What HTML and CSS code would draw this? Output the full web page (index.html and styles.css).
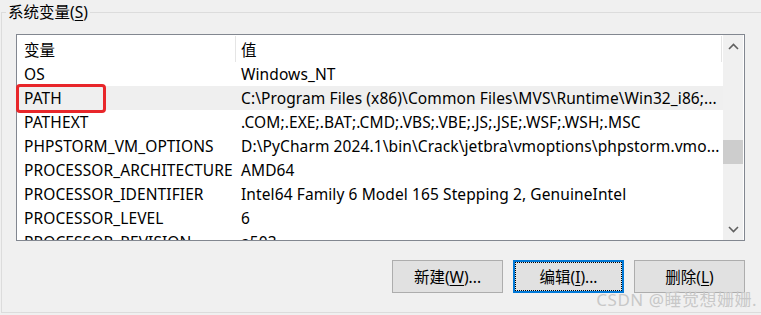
FILE: index.html
```html
<!DOCTYPE html>
<html lang="zh-CN">
<head>
    <meta charset="UTF-8">
    <meta name="viewport" content="width=device-width, initial-scale=1.0">
    <title>系统变量</title>
    <link rel="stylesheet" href="styles.css">
</head>
<body>
    <fieldset class="group">
        <legend>系统变量(<u>S</u>)</legend>

        <div class="list">
            <div class="rows">
                <div class="row header">
                    <div class="cell name">变量</div>
                    <div class="cell value">值</div>
                </div>
                <div class="row">
                    <div class="cell name">OS</div>
                    <div class="cell value">Windows_NT</div>
                </div>
                <div class="row hover">
                    <div class="cell name">PATH</div>
                    <div class="cell value">C:\Program Files (x86)\Common Files\MVS\Runtime\Win32_i86;...</div>
                </div>
                <div class="row">
                    <div class="cell name">PATHEXT</div>
                    <div class="cell value">.COM;.EXE;.BAT;.CMD;.VBS;.VBE;.JS;.JSE;.WSF;.WSH;.MSC</div>
                </div>
                <div class="row">
                    <div class="cell name">PHPSTORM_VM_OPTIONS</div>
                    <div class="cell value">D:\PyCharm 2024.1\bin\Crack\jetbra\vmoptions\phpstorm.vmo...</div>
                </div>
                <div class="row">
                    <div class="cell name">PROCESSOR_ARCHITECTURE</div>
                    <div class="cell value">AMD64</div>
                </div>
                <div class="row">
                    <div class="cell name">PROCESSOR_IDENTIFIER</div>
                    <div class="cell value">Intel64 Family 6 Model 165 Stepping 2, GenuineIntel</div>
                </div>
                <div class="row">
                    <div class="cell name">PROCESSOR_LEVEL</div>
                    <div class="cell value">6</div>
                </div>
                <div class="row">
                    <div class="cell name">PROCESSOR_REVISION</div>
                    <div class="cell value">a503</div>
                </div>
            </div>

            <div class="scrollbar">
                <div class="arrow">
                    <svg width="11" height="7" viewBox="0 0 11 7"><path d="M1 6 L5.5 1.5 L10 6" fill="none" stroke="#606060" stroke-width="1.6"/></svg>
                </div>
                <div class="track"><div class="thumb"></div></div>
                <div class="arrow">
                    <svg width="11" height="7" viewBox="0 0 11 7"><path d="M1 1 L5.5 5.5 L10 1" fill="none" stroke="#606060" stroke-width="1.6"/></svg>
                </div>
            </div>

            <div class="mark"></div>
        </div>

        <div class="buttons">
            <button>新建(<u>W</u>)...</button>
            <button class="focused">编辑(<u>I</u>)...</button>
            <button>删除(<u>L</u>)</button>
        </div>
    </fieldset>

    <div class="watermark">CSDN @睡觉想姗姗.</div>
</body>
</html>
```

FILE: styles.css
```css
body {
    margin: 0;
    height: 315px;
    overflow: hidden;
    background-color: #f0f0f0;
    font-family: "Noto Sans", "Noto Sans CJK SC", sans-serif;
    font-size: 15.5px;
    color: #000;
    position: relative;
}
.group {
    margin: 2px -20px 0 1px;
    padding: 0 0 19px 4px;
    border: 1px solid #dcdcdc;
    min-width: 0;
}
.group legend {
    padding: 0 2px;
    line-height: 20px;
}
.group u,
.buttons u {
    text-decoration-thickness: 1px;
    text-underline-offset: 2px;
}
.list {
    position: relative;
    display: flex;
    box-sizing: border-box;
    width: 729px;
    height: 207px;
    margin: 12px 0 0 10px;
    border: 1px solid #828790;
    background-color: #fff;
}
.rows {
    flex: 1;
    overflow: hidden;
    letter-spacing: 0.1px;
}
.row {
    display: flex;
    height: 24px;
    line-height: 24px;
    white-space: nowrap;
}
.row.hover {
    background-color: #efefef;
}
.cell {
    box-sizing: border-box;
    overflow: hidden;
}
.cell.name {
    width: 219px;
    padding-left: 7px;
}
.cell.value {
    width: 486px;
    padding: 0 4px 0 5px;
}
.header {
    height: 27px;
    line-height: 29px;
}
.header .cell {
    border-right: 1px solid #e5e5e5;
    margin-top: 1px;
}
.scrollbar {
    width: 20px;
    margin-right: 1px;
    display: flex;
    flex-direction: column;
    background-color: #f0f0f0;
}
.arrow {
    height: 22px;
    display: flex;
    align-items: center;
    justify-content: center;
}
.track {
    flex: 1;
}
.thumb {
    margin-top: 83px;
    height: 24px;
    background-color: #cdcdcd;
}
.mark {
    position: absolute;
    left: -1px;
    top: 49px;
    width: 90px;
    height: 29px;
    box-sizing: border-box;
    border: 3px solid #e8262a;
    border-radius: 4px;
}
.buttons {
    width: 729px;
    margin: 19px 0 0 10px;
    display: flex;
    justify-content: flex-end;
    gap: 10px;
}
.buttons button {
    width: 111px;
    height: 33px;
    box-sizing: border-box;
    border: 1px solid #adadad;
    background-color: #e1e1e1;
    font-family: inherit;
    font-size: 15.5px;
    color: #000;
    padding: 0;
}
.buttons button.focused {
    border: 2px solid #0078d7;
    outline: 1px dotted #000;
    outline-offset: -3px;
}
.watermark {
    position: absolute;
    right: 4px;
    bottom: 4px;
    font-size: 17px;
    color: #c8c8c8;
    letter-spacing: 0.5px;
}
```
